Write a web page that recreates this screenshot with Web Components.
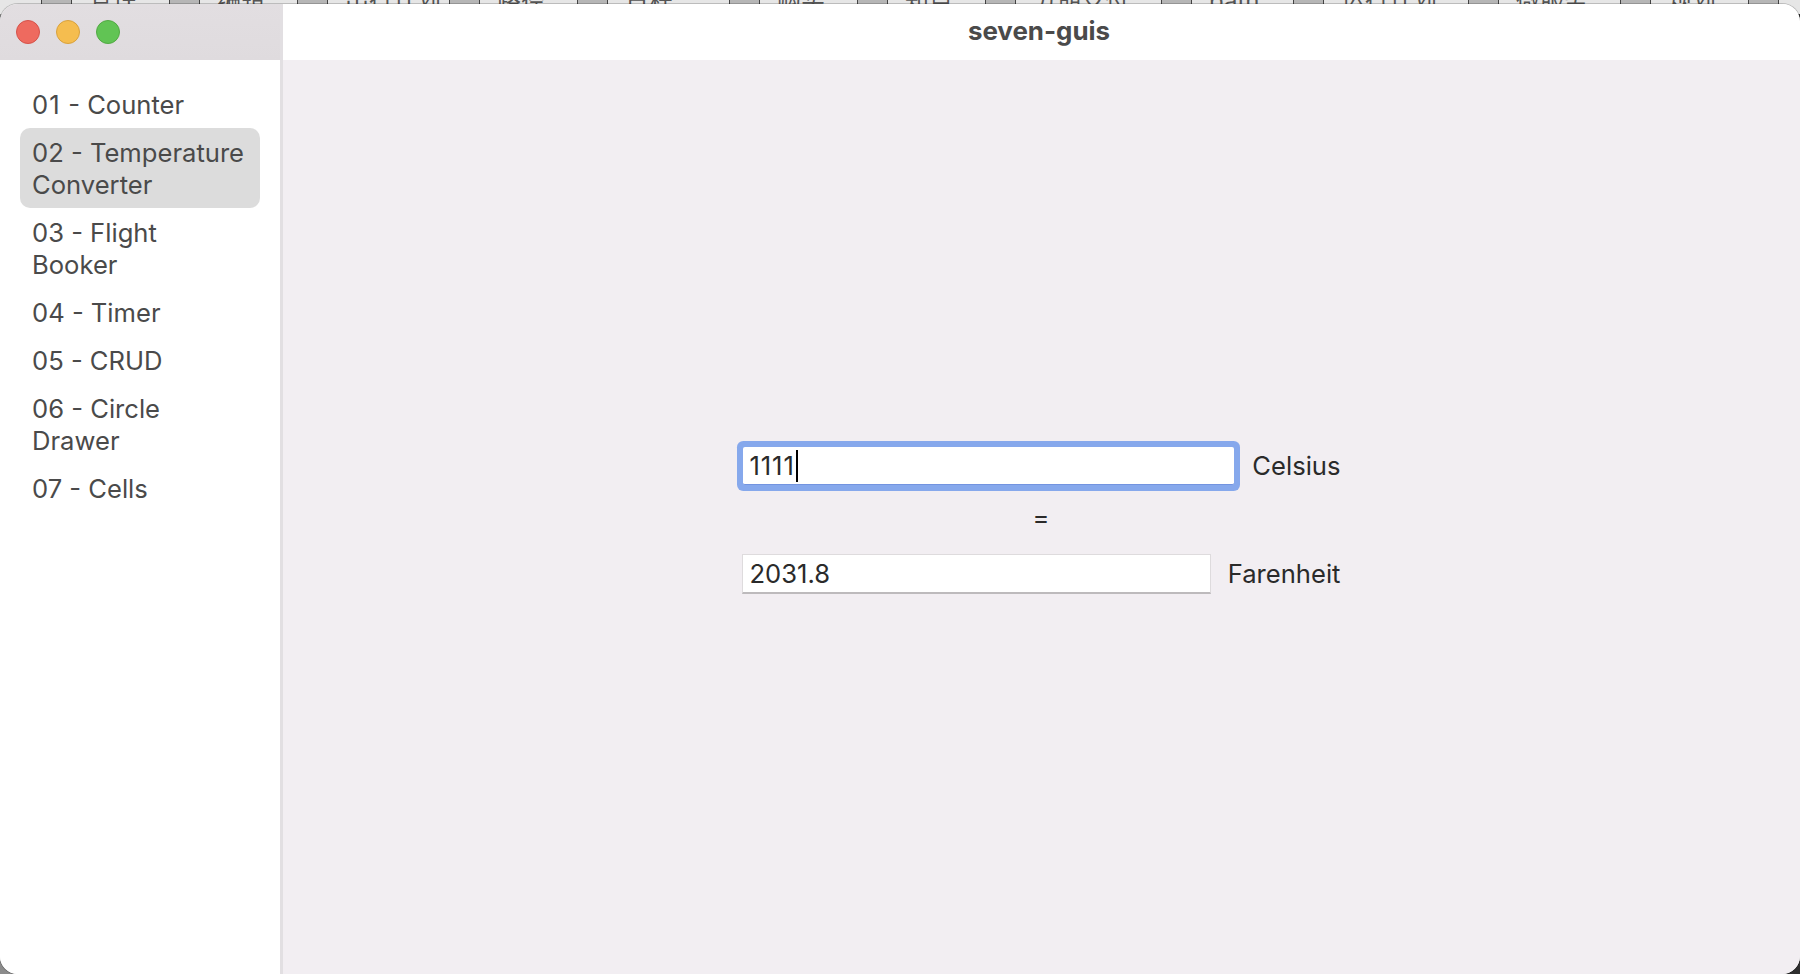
<!DOCTYPE html>
<html lang="en">
<head>
<meta charset="utf-8">
<title>seven-guis</title>
<style>
  html, body { margin: 0; height: 100%; overflow: hidden; }
  body { font-family: Inter, "Noto Sans CJK SC", sans-serif; }
</style>
</head>
<body>
<desk-top>
  <back-tab slot="tabs" at="41" label="管理" gap="17"></back-tab>
  <back-tab slot="tabs" at="169" label="编辑" gap="17"></back-tab>
  <back-tab slot="tabs" at="297" label="出行计划" gap="17"></back-tab>
  <back-tab slot="tabs" at="449" label="路径" gap="17"></back-tab>
  <back-tab slot="tabs" at="577" label="日程" gap="17"></back-tab>
  <back-tab slot="tabs" at="729" label="购买" gap="17"></back-tab>
  <back-tab slot="tabs" at="857" label="知点" gap="17"></back-tab>
  <back-tab slot="tabs" at="985" label="分期支付" gap="17"></back-tab>
  <back-tab slot="tabs" at="1161" label="path" gap="17"></back-tab>
  <back-tab slot="tabs" at="1293" label="运行计划" gap="17"></back-tab>
  <back-tab slot="tabs" at="1468" label="微服务" gap="17"></back-tab>
  <back-tab slot="tabs" at="1620" label="规划" gap="17"></back-tab>
  <back-tab slot="tabs" at="1748" label="" gap="0"></back-tab>

  <app-window title-text="seven-guis">
    <side-nav slot="nav">
      <nav-item><span style="letter-spacing: 1.2px">01</span> - Counter</nav-item>
      <nav-item active>02 - Temperature Converter</nav-item>
      <nav-item>03 - Flight Booker</nav-item>
      <nav-item>04 - Timer</nav-item>
      <nav-item>05 - CRUD</nav-item>
      <nav-item>06 - Circle Drawer</nav-item>
      <nav-item>07 - Cells</nav-item>
    </side-nav>
    <temp-form>
      <temp-row slot="celsius" value="1111" focused>Celsius</temp-row>
      <temp-row slot="farenheit" value="2031.8">Farenheit</temp-row>
    </temp-form>
  </app-window>
</desk-top>

<script>
class DeskTop extends HTMLElement {
  constructor() {
    super();
    this.attachShadow({mode: 'open'}).innerHTML = `
      <style>
        :host {
          display: block;
          position: relative;
          width: 100%;
          height: 100vh;
          overflow: hidden;
          background: linear-gradient(to right, #8c8c8c, #2e2e2e);
        }
        .strip {
          position: absolute;
          left: 0; right: 0; top: 0;
          height: 14px;
          overflow: hidden;
          background: #e6e6e6;
        }
        .win {
          position: absolute;
          left: 0; right: 0; top: 4px; bottom: 0;
        }
      </style>
      <div class="strip"><slot name="tabs"></slot></div>
      <div class="win"><slot></slot></div>
    `;
  }
}

// one tab of the browser window behind, only its top few pixels are visible
class BackTab extends HTMLElement {
  constructor() {
    super();
    const at = this.getAttribute('at');
    const gap = this.getAttribute('gap');
    const label = this.getAttribute('label');
    this.attachShadow({mode: 'open'}).innerHTML = `
      <style>
        :host { position: absolute; left: ${at}px; top: 0; display: flex; height: 14px; }
        .icon {
          box-sizing: border-box;
          width: 31px;
          height: 14px;
          background: #b6b6b6;
          border-left: 1px solid #444;
          border-right: 1px solid #444;
        }
        .label {
          margin-left: ${gap}px;
          margin-top: -15px;
          font: 24px/1.3 Inter, "Noto Sans CJK SC", sans-serif;
          color: #555;
          white-space: nowrap;
        }
      </style>
      <div class="icon"></div>
      <div class="label">${label}</div>
    `;
  }
}

class AppWindow extends HTMLElement {
  constructor() {
    super();
    const title = this.getAttribute('title-text');
    this.attachShadow({mode: 'open'}).innerHTML = `
      <style>
        :host {
          display: grid;
          grid-template-columns: 280px 3px 1fr;
          grid-template-rows: 56px 1fr;
          height: 100%;
          border-radius: 18px;
          overflow: hidden;
          background: #fff;
          box-shadow: 0 0 0 1px rgba(0,0,0,.18);
        }
        .lights {
          display: flex;
          align-items: center;
          gap: 16px;
          padding-left: 16px;
          background: linear-gradient(#e2dee1, #dfdbde);
        }
        .dot {
          box-sizing: border-box;
          width: 24px;
          height: 24px;
          border-radius: 50%;
          border: 1px solid;
        }
        .red { background: #ee6a5f; border-color: #d5524a; }
        .yellow { background: #f5bd4f; border-color: #d8a13d; }
        .green { background: #61c454; border-color: #52a944; }
        .line { grid-row: 1 / 3; grid-column: 2; background: #e2dfe2; }
        .title {
          display: flex;
          align-items: center;
          justify-content: center;
          background: #fff;
          color: #4a4a4a;
          font: 700 25.9px Inter, sans-serif;
          padding: 0 5px 4px 0;
        }
        .nav { background: #fff; padding: 20px; }
        .main { background: #f2eef2; display: flex; }
      </style>
      <div class="lights">
        <div class="dot red"></div><div class="dot yellow"></div><div class="dot green"></div>
      </div>
      <div class="line"></div>
      <div class="title">${title}</div>
      <div class="nav"><slot name="nav"></slot></div>
      <div class="main"><slot></slot></div>
    `;
  }
}

class SideNav extends HTMLElement {
  constructor() {
    super();
    this.attachShadow({mode: 'open'}).innerHTML = `
      <style>
        :host { display: flex; flex-direction: column; }
      </style>
      <slot></slot>
    `;
  }
}

class NavItem extends HTMLElement {
  constructor() {
    super();
    this.attachShadow({mode: 'open'}).innerHTML = `
      <style>
        :host {
          display: block;
          padding: 9px 12px 7px;
          border-radius: 10px;
          font: 25.6px/32px Inter, sans-serif;
          color: #4a4a4a;
        }
        :host([active]) { background: #dcdcdc; }
      </style>
      <slot></slot>
    `;
  }
}

class TempForm extends HTMLElement {
  constructor() {
    super();
    this.attachShadow({mode: 'open'}).innerHTML = `
      <style>
        :host {
          display: flex;
          flex: 1;
          align-items: center;
          justify-content: center;
          padding: 6px 1px 0 0;
        }
        .form { display: flex; flex-direction: column; width: 599px; }
        .eq {
          margin: 16px 0 20px;
          text-align: center;
          font: 25.6px/32px Inter, sans-serif;
          color: #2a2a2a;
        }
      </style>
      <div class="form">
        <slot name="celsius"></slot>
        <div class="eq">=</div>
        <slot name="farenheit"></slot>
      </div>
    `;
  }
}

class TempRow extends HTMLElement {
  constructor() {
    super();
    const value = this.getAttribute('value');
    const caret = this.hasAttribute('focused') ? '<span class="caret"></span>' : '';
    this.attachShadow({mode: 'open'}).innerHTML = `
      <style>
        :host {
          display: flex;
          align-items: center;
          height: 40px;
          gap: 17px;
          font: 25.6px/32px Inter, sans-serif;
          color: #2a2a2a;
        }
        :host([focused]) { gap: 18px; margin-left: 1px; }
        .field {
          box-sizing: border-box;
          flex: 1;
          display: flex;
          align-items: center;
          height: 40px;
          padding: 0 7px;
          background: #fff;
          border: 1px solid #dedbdd;
          border-bottom: 2px solid #bdbabc;
        }
        :host([focused]) .field {
          height: 38px;
          border: 0;
          border-bottom: 1px solid #7394e0;
          border-radius: 2px;
          padding: 0 7px;
          box-shadow: 0 0 0 6px #86a8ec;
        }
        :host([focused]) .value { letter-spacing: .9px; }
        .caret {
          display: inline-block;
          width: 2px;
          height: 32px;
          margin-left: 1px;
          background: #000;
        }
      </style>
      <div class="field"><span class="value">${value}</span>${caret}</div>
      <slot></slot>
    `;
  }
}

customElements.define('desk-top', DeskTop);
customElements.define('back-tab', BackTab);
customElements.define('app-window', AppWindow);
customElements.define('side-nav', SideNav);
customElements.define('nav-item', NavItem);
customElements.define('temp-form', TempForm);
customElements.define('temp-row', TempRow);
</script>
</body>
</html>
